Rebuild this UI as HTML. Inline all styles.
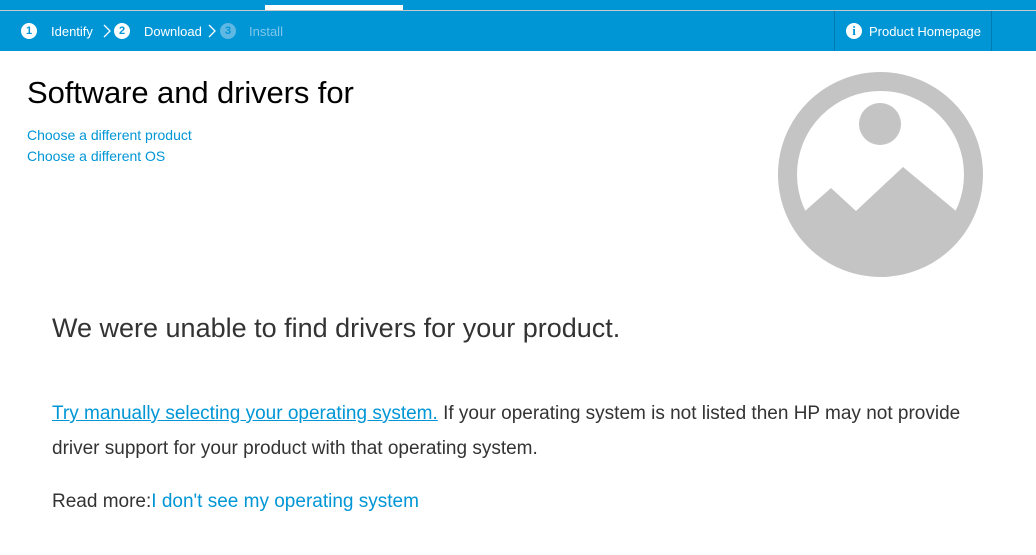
<!DOCTYPE html>
<html><head><style>
*{margin:0;padding:0;box-sizing:border-box}
body{width:1036px;height:555px;background:#fff;font-family:"Liberation Sans",sans-serif;position:relative;overflow:hidden}
.top{position:absolute;left:0;top:0;width:1036px;height:51px;background:#0096d6}
.gl{position:absolute;left:0;top:10px;width:1036px;height:1px;background:#c8c8c8}
.wb{position:absolute;left:265px;top:5px;width:138px;height:5px;background:#fff}
.n{position:absolute;top:23px;font-size:13px;color:#fff;line-height:17px}
.c{position:absolute;top:23px;width:16px;height:16px;border-radius:50%;background:#fff;color:#0096d6;font-size:11px;font-weight:bold;text-align:center;line-height:16px}
.ch{position:absolute;top:23px;width:8px;height:16px}
.div{position:absolute;top:11px;width:1px;height:40px;background:#0079b0}
h1{position:absolute;left:27px;top:75px;font-size:31px;font-weight:normal;color:#000;letter-spacing:-0.1px}
a{color:#0096d6;text-decoration:none}
.l{position:absolute;left:27px;font-size:14px}
p{position:absolute;left:52px;color:#333}
</style></head><body>
<div class="top"></div><div class="gl"></div><div class="wb"></div>
<span class="c" style="left:21px">1</span><span class="n" style="left:51px">Identify</span>
<svg class="ch" style="left:103px" viewBox="0 0 8 16"><path d="M1 2 L7 8 L1 14" fill="none" stroke="#fff" stroke-width="1.3"/></svg>
<span class="c" style="left:114px">2</span><span class="n" style="left:144px">Download</span>
<svg class="ch" style="left:208px" viewBox="0 0 8 16"><path d="M1 2 L7 8 L1 14" fill="none" stroke="#fff" stroke-width="1.3"/></svg>
<span class="c" style="left:220px;background:#5fb8e3;color:#0096d6">3</span><span class="n" style="left:249px;color:#80c6ea">Install</span>
<div class="div" style="left:834px"></div><div class="div" style="left:991px"></div>
<span class="c" style="left:846px;font-family:'Liberation Serif',serif;font-size:13px">i</span><span class="n" style="left:869px">Product Homepage</span>
<h1>Software and drivers for</h1>
<a class="l" style="top:127px">Choose a different product</a>
<a class="l" style="top:148px">Choose a different OS</a>
<svg style="position:absolute;left:0;top:0" width="1036" height="300">
<defs><clipPath id="cp"><circle cx="880.5" cy="174.5" r="84"/></clipPath></defs>
<circle cx="880.5" cy="174.5" r="93" fill="none" stroke="#c4c4c4" stroke-width="19"/>
<circle cx="880" cy="124" r="21" fill="#c4c4c4"/>
<polygon clip-path="url(#cp)" points="790,211 805,211 831,188 856,211 903,167 956,211 975,211 975,280 790,280" fill="#c4c4c4"/>
</svg>
<p style="top:313px;font-size:27px">We were unable to find drivers for your product.</p>
<p style="top:396px;font-size:19px;line-height:35px;width:940px"><a style="text-decoration:underline">Try manually selecting your operating system.</a> If your operating system is not listed then HP may not provide driver support for your product with that operating system.</p>
<p style="top:491px;font-size:19px">Read more:<a>I don't see my operating system</a></p>
</body></html>
